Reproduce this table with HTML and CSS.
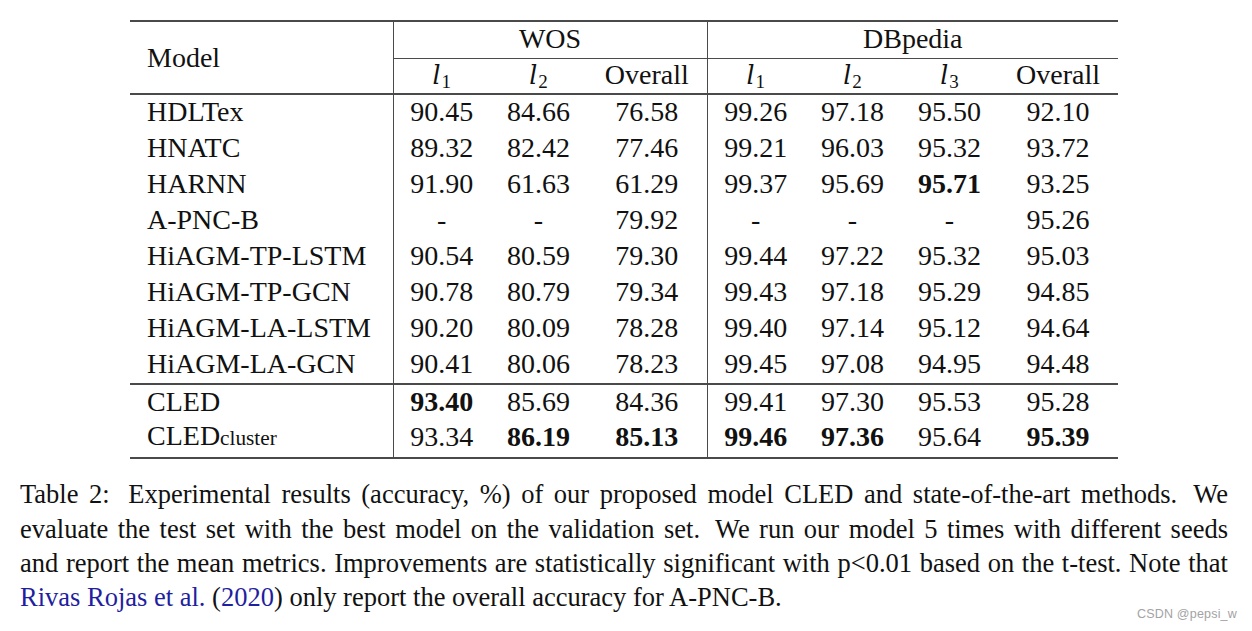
FILE: index.html
```html
<!DOCTYPE html>
<html lang="en">
<head>
<meta charset="utf-8">
<title>Table 2</title>
<link rel="stylesheet" href="styles.css">
</head>
<body>
<div class="page">
  <table class="results">
    <colgroup>
      <col class="c-model"><col class="c-n"><col class="c-n"><col class="c-o"><col class="c-n"><col class="c-n"><col class="c-n"><col class="c-o">
    </colgroup>
    <thead>
      <tr class="hrow1">
        <th rowspan="2" class="model">Model</th>
        <th colspan="3" class="grp sep">WOS</th>
        <th colspan="4" class="grp sep">DBpedia</th>
      </tr>
      <tr class="hrow2">
        <th class="sep"><span class="m">l</span><sub>1</sub></th>
        <th><span class="m">l</span><sub>2</sub></th>
        <th>Overall</th>
        <th class="sep"><span class="m">l</span><sub>1</sub></th>
        <th><span class="m">l</span><sub>2</sub></th>
        <th><span class="m">l</span><sub>3</sub></th>
        <th>Overall</th>
      </tr>
    </thead>
    <tbody class="base">
      <tr><td class="model">HDLTex</td><td class="sep">90.45</td><td>84.66</td><td>76.58</td><td class="sep">99.26</td><td>97.18</td><td>95.50</td><td>92.10</td></tr>
      <tr><td class="model">HNATC</td><td class="sep">89.32</td><td>82.42</td><td>77.46</td><td class="sep">99.21</td><td>96.03</td><td>95.32</td><td>93.72</td></tr>
      <tr><td class="model">HARNN</td><td class="sep">91.90</td><td>61.63</td><td>61.29</td><td class="sep">99.37</td><td>95.69</td><td class="b">95.71</td><td>93.25</td></tr>
      <tr><td class="model">A-PNC-B</td><td class="sep">-</td><td>-</td><td>79.92</td><td class="sep">-</td><td>-</td><td>-</td><td>95.26</td></tr>
      <tr><td class="model">HiAGM-TP-LSTM</td><td class="sep">90.54</td><td>80.59</td><td>79.30</td><td class="sep">99.44</td><td>97.22</td><td>95.32</td><td>95.03</td></tr>
      <tr><td class="model">HiAGM-TP-GCN</td><td class="sep">90.78</td><td>80.79</td><td>79.34</td><td class="sep">99.43</td><td>97.18</td><td>95.29</td><td>94.85</td></tr>
      <tr><td class="model">HiAGM-LA-LSTM</td><td class="sep">90.20</td><td>80.09</td><td>78.28</td><td class="sep">99.40</td><td>97.14</td><td>95.12</td><td>94.64</td></tr>
      <tr><td class="model">HiAGM-LA-GCN</td><td class="sep">90.41</td><td>80.06</td><td>78.23</td><td class="sep">99.45</td><td>97.08</td><td>94.95</td><td>94.48</td></tr>
    </tbody>
    <tbody class="ours">
      <tr><td class="model">CLED</td><td class="sep b">93.40</td><td>85.69</td><td>84.36</td><td class="sep">99.41</td><td>97.30</td><td>95.53</td><td>95.28</td></tr>
      <tr class="lastrow"><td class="model">CLED<span class="small">cluster</span></td><td class="sep">93.34</td><td class="b">86.19</td><td class="b">85.13</td><td class="sep b">99.46</td><td class="b">97.36</td><td>95.64</td><td class="b">95.39</td></tr>
    </tbody>
  </table>

  <div class="caption">
    <span class="line">Table 2:<span class="gap"></span> Experimental results (accuracy, %) of our proposed model CLED and state-of-the-art methods.<span class="gap2"></span> We</span>
    <span class="line">evaluate the test set with the best model on the validation set.<span class="gap2"></span> We run our model 5 times with different seeds</span>
    <span class="line">and report the mean metrics. Improvements are statistically significant with p&lt;0.01 based on the t-test. Note that</span>
    <span class="line last"><span class="cite">Rivas Rojas et al.</span> (<span class="cite">2020</span>) only report the overall accuracy for A-PNC-B.</span>
  </div>

  <div class="watermark">CSDN @pepsi_w</div>
</div>
</body>
</html>
```

FILE: styles.css
```css
html, body {
  margin: 0;
  padding: 0;
  background: #ffffff;
}

.page {
  position: relative;
  width: 1252px;
  height: 631px;
  overflow: hidden;
  padding-top: 20px;
  box-sizing: border-box;
  font-family: "Liberation Serif", "Times New Roman", serif;
  color: #111111;
}

.results {
  margin-left: 130px;
  border-collapse: collapse;
  table-layout: fixed;
  width: 987px;
  border-top: 2px solid #4a4a4a;
  border-bottom: 2px solid #4a4a4a;
  font-size: 28px;
}

.c-model { width: 263px; }
.c-n { width: 97px; }
.c-o { width: 120px; }

.results th,
.results td {
  padding: 0;
  height: 36px;
  line-height: 33px;
  padding-bottom: 3px;
  box-sizing: border-box;
  text-align: center;
  font-weight: normal;
  white-space: nowrap;
  vertical-align: middle;
}

.results .lastrow td {
  height: 34px;
  line-height: 30px;
  padding-bottom: 4px;
}

.hrow1 th {
  height: 36px;
  line-height: 34px;
  padding-bottom: 2px;
}

.hrow2 th {
  height: 35px;
  line-height: 32px;
  padding-bottom: 2px;
}

.results .model {
  text-align: left;
  padding-left: 17px;
}

.results .sep {
  border-left: 1px solid #4a4a4a;
}

.results .grp {
  border-bottom: 1px solid #4a4a4a;
}

.hrow2 th {
  border-bottom: 2px solid #4a4a4a;
}

.hrow1 th.model {
  border-bottom: 2px solid #4a4a4a;
  padding-bottom: 0;
}

.ours tr:first-child td {
  border-top: 2px solid #4a4a4a;
}

.results .b {
  font-weight: bold;
}

.m {
  font-style: italic;
  font-family: "DejaVu Serif", "Liberation Serif", serif;
  font-size: 0.9em;
  line-height: 1;
}

.results sub {
  font-size: 0.68em;
  line-height: 1;
  vertical-align: -0.22em;
  margin-left: 1px;
}

.small {
  font-size: 0.76em;
}

.caption {
  margin: 18px 0 0 20px;
  width: 1208px;
  font-size: 26.5px;
  line-height: 34.3px;
  color: #111111;
}

.caption .line {
  display: block;
  text-align: justify;
  text-align-last: justify;
  white-space: nowrap;
}

.caption .line.last {
  text-align: left;
  text-align-last: left;
}

.caption .gap {
  display: inline-block;
  width: 8px;
}

.caption .gap2 {
  display: inline-block;
  width: 6px;
}

.cite {
  color: #1f1fa0;
}

.watermark {
  position: absolute;
  right: 15px;
  bottom: 10px;
  font-family: "Liberation Sans", Arial, sans-serif;
  font-size: 12.5px;
  color: #a3a3a3;
  letter-spacing: 0.2px;
}
```
